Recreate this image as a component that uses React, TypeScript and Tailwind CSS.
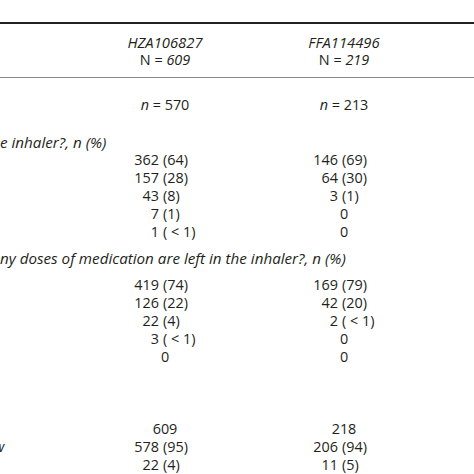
const font = { fontFamily: '"Open Sans", "Liberation Sans", sans-serif' };

type Cell = string | [string, string];

function Value({ v }: { v: Cell }) {
  if (typeof v === 'string') {
    return <div className="w-[120px] text-center">{v}</div>;
  }
  return (
    <div className="w-[120px] flex">
      <span className="w-[58px] text-right pr-[4px]">{v[0]}</span>
      <span className="flex-1 text-left">{v[1]}</span>
    </div>
  );
}

function Row({ label, a, b, className = '' }: { label?: string; a?: Cell; b?: Cell; className?: string }) {
  return (
    <div className={`flex h-[18px] leading-[18px] ${className}`}>
      <div className="w-[105px] shrink-0 whitespace-nowrap italic text-[15.2px] overflow-visible">{label}</div>
      <div className="w-[120px] shrink-0">{a !== undefined && <Value v={a} />}</div>
      <div className="w-[59px] shrink-0" />
      <div className="w-[120px] shrink-0">{b !== undefined && <Value v={b} />}</div>
    </div>
  );
}

const group1: [Cell, Cell][] = [
  [['362', '(64)'], ['146', '(69)']],
  [['157', '(28)'], ['64', '(30)']],
  [['43', '(8)'], ['3', '(1)']],
  [['7', '(1)'], '0'],
  [['1', '( < 1)'], '0'],
];

const group2: [Cell, Cell][] = [
  [['419', '(74)'], ['169', '(79)']],
  [['126', '(22)'], ['42', '(20)']],
  [['22', '(4)'], ['2', '( < 1)']],
  [['3', '( < 1)'], '0'],
  ['0', '0'],
];

export default function App() {
  return (
    <div className="w-[474px] h-[474px] bg-white overflow-hidden text-[14.4px] text-[#231f20]" style={font}>
      <div className="pt-[22px]">
        <div className="h-[2px] bg-[#222]" />
        <div className="h-[53px] flex pt-[10px] leading-[17px]">
          <div className="w-[105px] shrink-0" />
          <div className="w-[120px] shrink-0 text-center">
            <div className="italic text-[14.8px]">HZA106827</div>
            <div>
              N = <span className="italic">609</span>
            </div>
          </div>
          <div className="w-[59px] shrink-0" />
          <div className="w-[120px] shrink-0 text-center">
            <div className="italic text-[14.8px]">FFA114496</div>
            <div>
              N = <span className="italic">219</span>
            </div>
          </div>
        </div>
        <div className="h-px bg-[#888]" />

        <div className="flex h-[18px] leading-[18px] mt-[18px]">
          <div className="w-[105px] shrink-0" />
          <div className="w-[120px] shrink-0 text-center">
            <span className="italic">n</span> = 570
          </div>
          <div className="w-[59px] shrink-0" />
          <div className="w-[120px] shrink-0 text-center">
            <span className="italic">n</span> = 213
          </div>
        </div>

        <Row label="e inhaler?, n (%)" className="mt-[19px]" />
        {group1.map(([a, b], i) => (
          <Row key={i} a={a} b={b} />
        ))}

        <Row label="ny doses of medication are left in the inhaler?, n (%)" className="mt-[8px]" />
        <div className="mt-[9px]">
          {group2.map(([a, b], i) => (
            <Row key={i} a={a} b={b} />
          ))}
        </div>

        <div className="mt-[54px]">
          <Row a="609" b="218" />
          <div className="flex h-[18px] leading-[18px]">
            <div className="w-[105px] shrink-0 overflow-hidden">
              <span className="inline-block -ml-[6px] italic">w</span>
            </div>
            <div className="w-[120px] shrink-0">
              <Value v={['578', '(95)']} />
            </div>
            <div className="w-[59px] shrink-0" />
            <div className="w-[120px] shrink-0">
              <Value v={['206', '(94)']} />
            </div>
          </div>
          <Row a={['22', '(4)']} b={['11', '(5)']} />
        </div>
      </div>
    </div>
  );
}
